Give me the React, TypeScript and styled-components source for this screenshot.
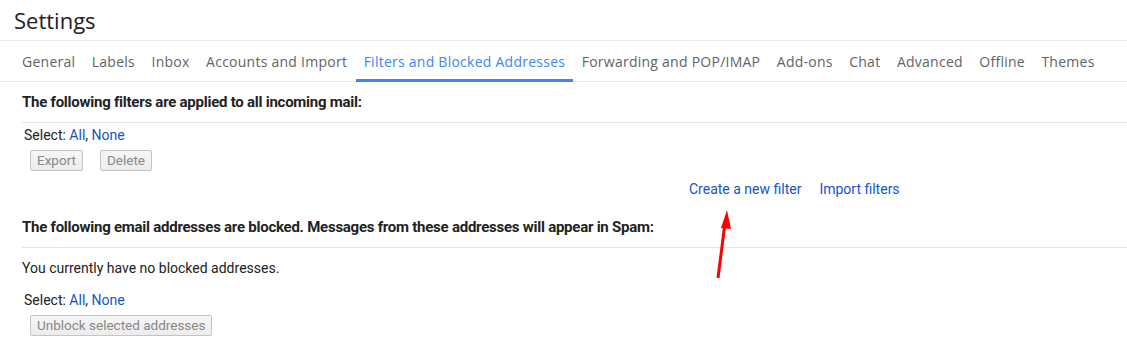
import React from "react";
import styled, { createGlobalStyle } from "styled-components";

const Global = createGlobalStyle`
  html, body { margin: 0; padding: 0; background: #fff; }
  body { font-family: Roboto, "Liberation Sans", Arial, sans-serif; color: #222; }
`;

const Page = styled.div`
  position: relative;
  width: 1127px;
  height: 360px;
  overflow: hidden;
`;

const TitleBar = styled.div`
  height: 40px;
  border-bottom: 1px solid #e8eaed;
  padding-left: 14px;
  display: flex;
  align-items: center;
  font-family: "Open Sans", sans-serif;
  font-size: 22px;
  color: #202124;
`;

const Tabs = styled.nav`
  height: 40px;
  border-bottom: 1px solid #e8eaed;
  padding-left: 14px;
  display: flex;
`;

const Tab = styled.div<{ $active?: boolean }>`
  display: flex;
  align-items: center;
  padding: 0 8px;
  margin-right: 0.5px;
  font-family: "Open Sans", sans-serif;
  font-size: 14px;
  letter-spacing: 0.25px;
  color: ${(p) => (p.$active ? "#4285f4" : "#5f6368")};
  box-sizing: border-box;
  border-bottom: 3px solid ${(p) => (p.$active ? "#4285f4" : "transparent")};
  padding-top: 2px;
  margin-bottom: -1px;
`;

const Content = styled.div`
  padding-left: 22px;
`;

const Heading = styled.div<{ $top: number }>`
  margin-top: ${(p) => p.$top}px;
  height: 40px;
  display: flex;
  align-items: center;
  border-bottom: 1px solid #e5e5e5;
  font-weight: 700;
  font-size: 15px;
  letter-spacing: -0.25px;
  color: #222;
`;

const SelectRow = styled.div<{ $top: number }>`
  margin-top: ${(p) => p.$top}px;
  padding-left: 2px;
  height: 22px;
  display: flex;
  align-items: center;
  font-size: 14px;
  color: #222;
`;

const Link = styled.a`
  color: #1155cc;
  text-decoration: none;
  cursor: pointer;
`;

const ButtonRow = styled.div<{ $top: number }>`
  margin-top: ${(p) => p.$top}px;
  padding-left: 8px;
  display: flex;
  gap: 17px;
`;

const Btn = styled.button`
  height: 21px;
  padding: 0 6px;
  font-family: Roboto, sans-serif;
  font-size: 13.5px;
  color: #888;
  background: linear-gradient(#f6f6f6, #ececec);
  border: 1px solid #c4c4c4;
  border-radius: 2px;
  line-height: 19px;
`;

const LinksRow = styled.div`
  margin-top: 8px;
  padding-left: 667px;
  height: 20px;
  display: flex;
  align-items: center;
  gap: 18px;
  font-size: 14px;
`;

const Plain = styled.div`
  height: 40px;
  display: flex;
  align-items: center;
  font-size: 14px;
  color: #222;
`;

const Arrow = styled.svg`
  position: absolute;
  left: 708px;
  top: 205px;
`;

const tabs = [
  "General",
  "Labels",
  "Inbox",
  "Accounts and Import",
  "Filters and Blocked Addresses",
  "Forwarding and POP/IMAP",
  "Add-ons",
  "Chat",
  "Advanced",
  "Offline",
  "Themes",
];

export default function App() {
  return (
    <Page>
      <Global />
      <TitleBar>Settings</TitleBar>
      <Tabs>
        {tabs.map((t) => (
          <Tab key={t} $active={t === "Filters and Blocked Addresses"}>
            {t}
          </Tab>
        ))}
      </Tabs>
      <Content>
        <Heading $top={0}>The following filters are applied to all incoming mail:</Heading>
        <SelectRow $top={1}>
          Select:&nbsp;<Link>All</Link>,&nbsp;<Link>None</Link>
        </SelectRow>
        <ButtonRow $top={4}>
          <Btn disabled>Export</Btn>
          <Btn disabled>Delete</Btn>
        </ButtonRow>
        <LinksRow>
          <Link>Create a new filter</Link>
          <Link>Import filters</Link>
        </LinksRow>
        <Heading $top={8}>
          The following email addresses are blocked. Messages from these addresses will appear in Spam:
        </Heading>
        <Plain>You currently have no blocked addresses.</Plain>
        <SelectRow $top={1}>
          Select:&nbsp;<Link>All</Link>,&nbsp;<Link>None</Link>
        </SelectRow>
        <ButtonRow $top={4}>
          <Btn disabled>Unblock selected addresses</Btn>
        </ButtonRow>
      </Content>
      <Arrow width="30" height="80" viewBox="0 0 30 80">
        <line x1="10" y1="73" x2="17" y2="18" stroke="#ff0000" strokeWidth="3" />
        <polygon points="19,5 13,23 23,24" fill="#ff0000" />
      </Arrow>
    </Page>
  );
}
